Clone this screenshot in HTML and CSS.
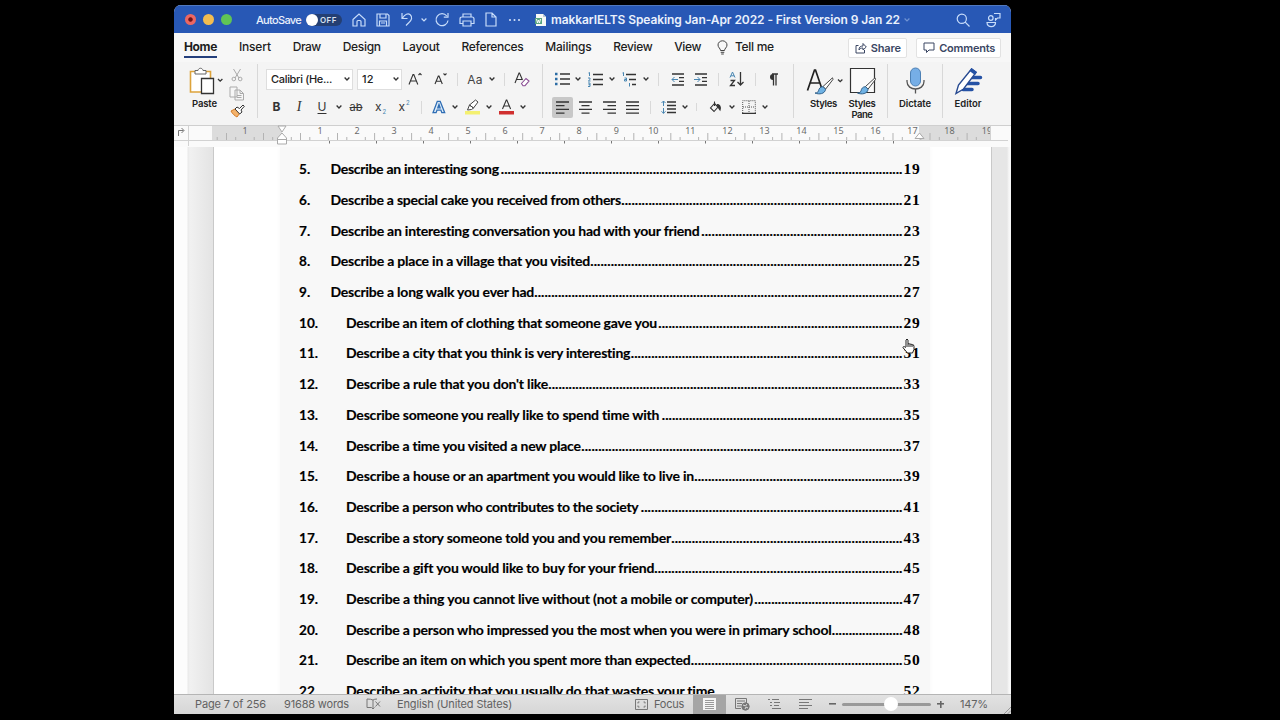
FILE: index.html
```
<!DOCTYPE html>
<html lang="en">
<head>
<meta charset="utf-8">
<title>makkarIELTS Speaking</title>
<link rel="stylesheet" href="styles.css">
</head>
<body>
<svg class="defs" width="0" height="0">
  <symbol id="chev" viewBox="0 0 8 6"><path d="M1.6 1.5 4 4 6.4 1.5"/></symbol>
  <symbol id="brush" viewBox="0 0 20 18"><path fill="#fff" stroke="#444" d="M18.5.8 9 9.5l2.6 2.6L19 2.4z"/><path fill="#6fb2e4" stroke="#34638c" d="M9 9.7c-3 0-4 2-4.500 4.200C4 15.500 2.500 16 1 16c4 1.800 10 1 10.600-3.800z"/></symbol>
</svg>
<div class="window">
  <header class="titlebar">
    <span class="light red"></span><span class="light yellow"></span><span class="light green"></span>
    <span class="autosave fit" data-w="45">AutoSave</span>
    <span class="toggle"><i></i>OFF</span>
    <svg class="ti" width="14" height="14" viewBox="0 0 14 14"><path d="M1 6.500 7 1l6 5.500V13H9V8.500Q9 7.500 8 7.500H6Q5 7.500 5 8.500V13H1z"/></svg>
    <svg class="ti" width="14" height="14" viewBox="0 0 14 14"><path d="M1 1h10.500L13 2.500V13H1zM4 1v4h6V1M3.500 13V8h7v5M5 10h4"/></svg>
    <svg class="ti" width="14" height="15" viewBox="0 0 14 15"><path d="M2 1v5.500h5.500M2.500 6C5 2 8 1 10 2.500c3 2.500 1.500 6-1 8L6 13.500"/></svg>
    <svg class="ti" width="8" height="6"><use href="#chev"/></svg>
    <svg class="ti" width="16" height="15" viewBox="0 0 16 15"><path d="M12.800 4A6 6 0 1 0 14 8.500M14 1v4.200H9.800"/></svg>
    <svg class="ti" width="16" height="14" viewBox="0 0 16 14"><path d="M4 4V1h8v3M4 10.500H1V6q0-2 2-2h10q2 0 2 2v4.500h-3M4 8h8v5H4z"/></svg>
    <svg class="ti" width="12" height="15" viewBox="0 0 12 15"><path d="M1 1h6l4 4v9H1zM7 1v4h4"/></svg>
    <svg class="ti dots" width="13" height="4"><circle cx="2" cy="2" r="1"/><circle cx="6.500" cy="2" r="1"/><circle cx="11" cy="2" r="1"/></svg>
    <svg width="13" height="14" viewBox="0 0 13 14"><path fill="#f6f9f5" d="M2 1h7l3 3v9H2z"/><path fill="#b9c9d6" d="M9 1v3h3z"/><rect x="1" y="5" width="7" height="6" fill="#59a481"/><path stroke="#fff" fill="none" d="m2.500 6 1 4 1-3 1 3 1-4"/></svg>
    <span class="doc-title fit" data-w="349">makkarIELTS Speaking Jan-Apr 2022 - First Version 9 Jan 22</span>
    <svg class="ti faint" width="8" height="6"><use href="#chev"/></svg>
    <svg class="ti" width="14" height="14" viewBox="0 0 14 14"><circle cx="5.800" cy="5.800" r="4.600"/><path d="m9.200 9.200 4.300 4.300"/></svg>
    <svg class="ti" width="15" height="16" viewBox="0 0 15 16"><circle cx="4.800" cy="6" r="2.300"/><path d="M1 10.500h8.500c.5 5-8.500 6-8.500 0zM8 1.500h6V6h-2.500L9.500 8V6"/></svg>
  </header>

  <nav class="tabs">
    <span class="tab active fit" data-w="33">Home</span>
    <span class="tab fit" data-w="32">Insert</span>
    <span class="tab fit" data-w="28">Draw</span>
    <span class="tab fit" data-w="38">Design</span>
    <span class="tab fit" data-w="37">Layout</span>
    <span class="tab fit" data-w="62">References</span>
    <span class="tab fit" data-w="46">Mailings</span>
    <span class="tab fit" data-w="39">Review</span>
    <span class="tab fit" data-w="27">View</span>
    <svg class="bulb" width="11" height="15" viewBox="0 0 11 15"><path d="M3.500 10.500C3.500 8.500 1 7.500 1 5a4.500 4.200 0 0 1 9 0c0 2.500-2.500 3.500-2.500 5.500zM3.700 12.300h3.600M4.200 14h2.600"/></svg>
    <span class="tab tell fit" data-w="39">Tell me</span>
    <span class="btn share"><svg width="12" height="12" viewBox="0 0 12 12"><path d="M3.500 3.500H1V11h8.500V8M4 8c0-3 1.500-4 4-4V1.500L11.300 5 8 8V6C6 6 5 6.500 4 8z"/></svg><span class="fit" data-w="30">Share</span></span>
    <span class="btn"><svg width="12" height="12" viewBox="0 0 12 12"><path d="M1 1h10v7H6l-2.500 2.500V8H1z"/></svg><span class="fit" data-w="56">Comments</span></span>
  </nav>

  <section class="ribbon">
    <div class="group clipboard">
      <div class="paste">
        <svg width="36" height="30" viewBox="0 0 36 30"><path fill="#fff" stroke="#dda33b" stroke-width="1.600" d="M2.500 5.500h20V26h-20z"/><path fill="#fff" stroke="#666" d="M7 8V4.500h3C10.500 1.500 14.500 1.500 15 4.500h3V8z"/><path fill="#fff" stroke="#333" stroke-width="1.300" d="M13.500 12.500h12v15h-12z"/><path class="ln" stroke-width="1.500" d="m30 13 2.200 2.200 2.200-2.200"/></svg>
        <b class="fit" data-w="25">Paste</b>
      </div>
      <div class="clips">
        <svg width="12" height="14" viewBox="0 0 12 14" fill="none" stroke="#aaa"><path d="m2.500 1 5.500 9M9.500 1 4 10"/><circle cx="2.800" cy="11" r="1.800"/><circle cx="9.200" cy="11" r="1.800"/></svg>
        <svg width="16" height="16" viewBox="0 0 16 16" fill="#f6f6f6" stroke="#aaa"><path d="M1 2h7v10H1zM6 5h5l3.500 3.500V15H6zM11 5v3.500h3.500M8 10.500h4.500M8 12.500h4.500"/></svg>
        <svg width="15" height="14" viewBox="0 0 15 14"><path fill="#f3b26b" stroke="#d37c2a" d="m1 7 4-2 4.500 4.500L7 13C5 12 2.500 10 1 7z"/><path fill="#fff" stroke="#333" d="m5 5 2-2 2.500 1.500L13 1l1.300 1.300L11 6l1 2-2.300 2z"/></svg>
      </div>
    </div>

    <div class="group font">
      <div class="row font1">
        <span class="box"><span class="fit" data-w="61">Calibri (He...</span><svg class="ln" width="8" height="6"><use href="#chev"/></svg></span>
        <span class="box"><span class="fit" data-w="11.500">12</span><svg class="ln" width="8" height="6"><use href="#chev"/></svg></span>
        <svg class="ln thin" width="14" height="14" viewBox="0 0 14 14"><path d="m1 12.500 4-10h.8l4 10M2.500 9h6M10.500 3l1.500-1.500L13.500 3"/></svg>
        <svg class="ln thin" width="13" height="14" viewBox="0 0 13 14"><path d="m1 12 3.300-8H5l3.300 8M2.300 9.200H7M9.500 1.500 11 3l1.500-1.500"/></svg>
        <i class="sep"></i>
        <span class="aa">Aa</span>
        <svg class="ln" width="8" height="6"><use href="#chev"/></svg>
        <i class="sep"></i>
        <svg class="ln thin" width="16" height="15" viewBox="0 0 16 15"><path d="m1 11 4-10h.5l3 7M2.500 7.500H8"/><path stroke="#8a4d94" fill="#fff" d="m7.500 11.500 4.500-5 3 2.500-4 4.700H9z"/></svg>
      </div>
      <div class="row font2">
        <b class="gl">B</b><span class="gl it">I</span><span class="gl un">U</span>
        <svg class="ln" width="8" height="6"><use href="#chev"/></svg>
        <span class="gl st">ab</span>
        <span class="gl">x<sub>2</sub></span><span class="gl">x<sup>2</sup></span>
        <i class="sep"></i>
        <svg width="14" height="14" viewBox="0 0 14 14" fill="#dcebf8" stroke="#2e6db4" stroke-width="1.300"><path d="M1 12.700 5.300 1.300h2.900l4.500 11.400H9.800l-.9-2.600H5l-.9 2.600zM5.800 7.800h2.300L7 4.500z"/></svg>
        <svg class="ln" width="8" height="6"><use href="#chev"/></svg>
        <svg width="15" height="16" viewBox="0 0 15 16"><path fill="#f4f070" d="M0 12h15v3.500H0z"/><path fill="#fff" stroke="#444" d="m4.500 6 6-5 2.500 2-4.500 6zM4.500 6l4 3-2 1.500-4 .5z"/></svg>
        <svg class="ln" width="8" height="6"><use href="#chev"/></svg>
        <svg width="15" height="16" viewBox="0 0 15 16"><path fill="#d0302f" d="M0 12h15v3.500H0z"/><path class="ln thin" d="M3.500 10 7.300 1h.5l3.800 9M5 7h5"/></svg>
        <svg class="ln" width="8" height="6"><use href="#chev"/></svg>
      </div>
    </div>

    <div class="group para">
      <div class="row para1">
        <svg width="15" height="14" viewBox="0 0 15 14"><path class="ln" d="M5 2h10M5 7h10M5 12h10"/><path fill="#2b6ca5" d="M0 .8h2.500v2.500H0zM0 5.800h2.500v2.500H0zM0 10.800h2.500v2.500H0z"/></svg>
        <svg class="ln" width="8" height="6"><use href="#chev"/></svg>
        <svg width="15" height="15" viewBox="0 0 15 15"><path class="ln" d="M5 2.500h10M5 7.500h10M5 12.500h10"/><path class="bl" d="M.5 1 1.500.5V4M0 6h2v1.500L.3 9H2.500M0 11h2v3.500H0M.5 12.700H2"/></svg>
        <svg class="ln" width="8" height="6"><use href="#chev"/></svg>
        <svg width="15" height="15" viewBox="0 0 15 15"><path class="ln" d="M4 2.500h10M7 7.500h7M10 12.500h4"/><path class="bl" d="M.5 1 1.500.5V4M2.500 6h2v3h-2V7.500h2M7.500 11v3.500"/></svg>
        <svg class="ln" width="8" height="6"><use href="#chev"/></svg>
        <i class="sep"></i>
        <svg width="14" height="13" viewBox="0 0 14 13"><path class="ln" d="M1 1h12M8 4.700h5M8 8.300h5M1 12h12"/><path class="bl" d="M7 6.500H1M3.500 4 1 6.500 3.500 9"/></svg>
        <svg width="14" height="13" viewBox="0 0 14 13"><path class="ln" d="M1 1h12M8 4.700h5M8 8.300h5M1 12h12"/><path class="bl" d="M0 6.500h6M3.500 4 6 6.500 3.500 9"/></svg>
        <i class="sep"></i>
        <svg width="16" height="16" viewBox="0 0 16 16"><path class="bl" d="m1 6.500 2.500-5.500L6 6.500M2 4.800h3"/><path class="ln" d="M1.500 9.500H5.500L1.500 14.500H6M11.500 1v13M8.500 11l3 3 3-3"/></svg>
        <i class="sep"></i>
        <svg width="10" height="13" viewBox="0 0 10 13"><path fill="#333" d="M5 1a3 3 0 0 0 0 6z"/><path class="ln" d="M4 1h6M5.500 1v11.500M8 1v11.500"/></svg>
      </div>
      <div class="row para2">
        <span class="on"><svg class="ln" width="13" height="13"><path d="M0 1h13M0 4.700h8.500M0 8.400h13M0 12.100h8.500"/></svg></span>
        <svg class="ln" width="13" height="13"><path d="M0 1h13M2.500 4.700h8M0 8.400h13M2.500 12.100h8"/></svg>
        <svg class="ln" width="13" height="13"><path d="M0 1h13M4.500 4.700H13M0 8.400h13M4.500 12.100H13"/></svg>
        <svg class="ln" width="13" height="13"><path d="M0 1h13M0 4.700h13M0 8.400h13M0 12.100h13"/></svg>
        <i class="sep"></i>
        <svg width="15" height="14" viewBox="0 0 15 14"><path class="ln" d="M6 2h9M6 5.500h9M6 9h9M6 12.500h9"/><path class="bl" d="M2.500 1v5M.5 3l2-2 2 2M2.500 8v5.500M.5 11.300l2 2 2-2"/></svg>
        <svg class="ln" width="8" height="6"><use href="#chev"/></svg>
        <i class="sep short"></i>
        <svg class="ln thin" width="13" height="13" viewBox="0 0 13 13"><path d="m5.500 2.500 3.500 3.500-4 4.500L1.500 7zM5.500 5V.5"/><path fill="#333" d="M8.500 3.500c2 0 3.500 2 2.500 5.500L9 6z"/></svg>
        <svg class="ln" width="8" height="6"><use href="#chev"/></svg>
        <svg width="14" height="14" viewBox="0 0 14 14"><path fill="none" stroke="#555" stroke-dasharray="1 1" d="M.7 13V.7h12.600V13M7 1v12M1 7h12"/><path class="ln" d="M0 13.300h14"/></svg>
        <svg class="ln" width="8" height="6"><use href="#chev"/></svg>
      </div>
    </div>

    <div class="group styles">
      <div class="big">
        <svg width="38" height="28" viewBox="0 0 38 28"><path fill="none" stroke="#222" stroke-width="1.700" d="M.5 24.500 7.500 4h1L15.500 24.500M3 17h10"/><use href="#brush" x="7" y="11" width="20" height="18"/><path class="ln" d="m31 13.500 2.200 2.200 2.200-2.200"/></svg>
        <b class="fit" data-w="27">Styles</b>
      </div>
      <div class="big pane">
        <svg width="28" height="28" viewBox="0 0 28 28"><path fill="#fafafa" stroke="#333" stroke-width="1.200" d="M2.500 2.500h24v24h-24z"/><use href="#brush" x="8.500" y="11" width="20" height="18"/></svg>
        <b class="fit" data-w="27">Styles</b><b class="fit" data-w="21">Pane</b>
      </div>
    </div>
    <div class="group one">
      <div class="big">
        <svg width="20" height="28" viewBox="0 0 20 28"><rect x="5.500" y="2" width="10" height="18" rx="5" fill="#76aee6" stroke="#4c80b4"/><path fill="none" stroke="#555" stroke-width="1.300" d="M2 14v1.500c0 10 17 10 17 0V14M10.500 23v4.500"/></svg>
        <b class="fit" data-w="32">Dictate</b>
      </div>
    </div>
    <div class="group one last">
      <div class="big">
        <svg width="28" height="28" viewBox="0 0 28 28"><path stroke="#2552a5" stroke-width="3.500" stroke-linecap="round" d="M15 11.500h11.500M12 17.500h12M9 23.500h9"/><path fill="#fff" stroke="#274a91" stroke-width="1.400" d="M2 27.500 4.500 19 17.500 3l4.500 3.500L9.500 23z"/><path fill="#2552a5" d="m17.500 2 5.500 4-2 3-5.500-4z"/></svg>
        <b class="fit" data-w="27">Editor</b>
      </div>
    </div>
  </section>

  <div class="ruler"><svg id="ruler" width="837" height="20"></svg></div>

  <main class="canvas">
    <div class="gutter"></div>
    <div class="page"><div class="toc" id="toc"></div></div>
    <div class="edge"></div>
    <svg class="cursor" width="14" height="16" viewBox="0 0 14 16"><path fill="#fff" stroke="#222" d="M4 9V2q1-2 2 0v4q1-1 2 .3 1-.8 2 .4 2-.5 2 1.800v3L10.500 15H5.500L1 9.700Q1 7.500 4 9.500M6 6v3M8 6.500V9M10 7v2"/></svg>
  </main>

  <footer class="status">
    <span class="fit" data-w="71">Page 7 of 256</span>
    <span class="fit words" data-w="65">91688 words</span>
    <svg class="sl book" width="15" height="12" viewBox="0 0 15 12"><path d="M7 10V2Q5 1 1 1v8.500h4.500L7 11l1.500-1.500M7 2q1.500-1 4-1M9.500 3.500 14 8.500M14 3.500 9.500 8.500"/></svg>
    <span class="fit" data-w="115">English (United States)</span>
    <svg class="sl focus" width="13" height="11" viewBox="0 0 13 11"><path d="M.5.5h12v10H.5zM3 4.500V3h1.500M8.500 3H10v1.500M3 6.500V8h1.500M8.500 8H10V6.500"/></svg>
    <span class="fit" data-w="30">Focus</span>
    <span class="view"><svg width="13" height="12" viewBox="0 0 13 12"><path fill="#f5f5f5" d="M0 0h13v12H0z"/><path stroke="#999" d="M2 2.500h9M2 4.500h9M2 6.500h9M2 8.500h9M2 10.500h9"/></svg></span>
    <svg class="sl web" width="15" height="13" viewBox="0 0 15 13"><path d="M6 10.500H.5v-10h11V5M2 3h8M2 5.500h5M2 8h4"/><circle cx="10.500" cy="8.500" r="3.700" fill="#777"/><path stroke="#ddd" d="m8 7 2.500 1 1.500-2M10 11l1-2 2 1"/></svg>
    <svg class="sl outl" width="13" height="11"><path d="M0 .5h2M4 .5h7M2 3.500h2M6 3.500h6M2 6.500h2M6 6.500h5M4 9.500h9"/></svg>
    <svg class="sl draft" width="13" height="11"><path d="M0 .5h13M0 3.500h10M0 6.500h13M0 9.500h9"/></svg>
    <span class="sym minus"></span>
    <span class="slider"><i></i></span>
    <span class="sym plus"></span>
    <span class="fit zoom" data-w="28">147%</span>
    <svg class="grip" width="8" height="8"><path d="M1 8 8 1M4.500 8 8 4.500"/></svg>
  </footer>
</div>
<script src="app.js"></script>
</body>
</html>
```
FILE: styles.css
```
* { box-sizing: border-box; }
body { margin: 0; height: 720px; overflow: hidden; background: #000; font-family: Inter, "Liberation Sans", sans-serif; color: #222; }
svg { display: block; overflow: visible; flex: none; }
.defs { position: absolute; }
.fit { white-space: nowrap; display: inline-block; }
.window { width: 837px; height: 709px; margin: 5px 0 0 174px; display: flex; flex-direction: column; background: #f4f4f4; border-radius: 7px 7px 0 0; overflow: hidden; }

.titlebar { height: 28px; flex: none; background: #2858b5; border-top: 1px solid #5079bf; display: flex; align-items: center; color: #eaf1fc; }
.light { width: 11px; height: 11px; border-radius: 50%; flex: none; margin-right: 7px; }
.red { background: radial-gradient(circle, #71131a 0 1.8px, #ec6762 2.6px); margin-left: 11px; }
.yellow { background: #f3bd50; }
.green { background: #60c455; margin-right: 24px; }
.autosave { font-size: 11px; font-weight: 500; width: 45px; margin-right: 5px; }
.toggle { width: 36px; height: 12px; border-radius: 6px; background: #243f73; display: flex; flex: none; align-items: center; font-size: 8px; font-weight: 600; letter-spacing: .4px; color: #d9e1ef; margin-right: 10px; }
.toggle i { width: 12px; height: 12px; border-radius: 50%; background: #fff; margin-right: 2px; }
.ti { fill: none; stroke: #c7dcfa; stroke-width: 1.2; margin-right: 10px; }
.ti:nth-of-type(3) { margin-right: 6px; }
.ti:nth-of-type(4) { margin-right: 6px; }
.ti:nth-of-type(5) { margin-right: 9px; }
.dots { fill: #d7e5fb; stroke: none; margin: 0 13px 0 1px; }
.doc-title { font-size: 12px; font-weight: 600; width: 349px; margin: 0 3px 0 4px; }
.faint { opacity: .45; margin-right: 45px; }
.faint + .ti { margin-right: 16px; }

.tabs { height: 29px; flex: none; display: flex; align-items: center; gap: 21.900px; padding-left: 10px; font-size: 12px; font-weight: 500; color: #1d1d1d; background: #f7f7f7; }
.tab { height: 29px; line-height: 27px; }
.active { font-weight: 700; background: linear-gradient(#243f7c, #243f7c) 0 23px / 100% 2px no-repeat; }
.bulb { fill: none; stroke: #444; margin: 0 -15px 0 -6px; }
.tell { margin-right: 52px; }
.btn { height: 20px; border: 1px solid #e2e2e2; background: #fff; border-radius: 2px; display: flex; align-items: center; gap: 4px; padding: 0 5px 0 6px; font-size: 11px; font-weight: 600; color: #3a4663; }
.btn svg { fill: none; stroke: #3a4663; }
.share { margin-right: -12.500px; }

.ribbon { height: 64px; flex: none; display: flex; background: #f4f4f4; border-bottom: 1px solid #cfcfcf; }
.group { position: relative; padding-top: 2px; border-right: 1px solid #d8d8d8; height: 54px; margin-top: 2px; flex: none; }
.ribbon b { font-size: 9.5px; font-weight: 600; line-height: 11px; }
.clipboard { width: 84px; display: flex; padding-left: 14px; }
.paste { width: 38px; display: flex; flex-direction: column; align-items: flex-start; gap: 2px; }
.paste b { margin-left: 4px; }
.clips { display: flex; flex-direction: column; align-items: center; gap: 3px; margin-left: 3px; padding-top: 2px; }
.row { display: grid; align-items: center; justify-items: center; height: 28px; }
.font { width: 285px; padding: 1px 0 0 8px; }
.font1 { grid-template-columns: 87px 4px 45px 26px 24px 10px 26px 7px 18px 18px; }
.font1 > :nth-child(2) { grid-column: 3; }
.font2 { grid-template-columns: 21px 24px 22px 11px 24px 25px 22px 12px 23px 10px 25px 8px 27px 5px; }
.para { width: 251px; padding: 1px 0 0 9px; }
.para1 { grid-template-columns: 20px 12px 23px 10px 25px 8px 17px 21px 25px 11px 25px 13px 22px; }
.para2 { grid-template-columns: 21px 25px 22px 24px 12px 25px 7px 17px 21px 11px 24px 8px; }
.box { width: 100%; height: 21px; background: #fff; border: 1px solid #dedede; display: flex; align-items: center; justify-content: space-between; padding: 0 1px 0 4px; font-size: 11px; font-weight: 500; }
.ln { fill: none; stroke: #333; stroke-width: 1.3; }
.thin { stroke-width: 1.1; }
.bl { fill: none; stroke: #4886b2; stroke-width: 1; }
.sep { width: 1px; height: 13px; background: #d9d9d9; }
.short { height: 8px; }
.aa { font-size: 12px; color: #444; letter-spacing: .3px; }
.gl { font-size: 12px; line-height: 14px; color: #333; }
.ribbon .font2 b { font-size: 12px; line-height: 14px; font-weight: 700; }
.it { font-family: "Liberation Serif", serif; font-style: italic; font-size: 14px; }
.un { text-decoration: underline; text-underline-offset: 2px; }
.st { text-decoration: line-through; font-size: 11px; }
.gl sub, .gl sup { font-size: 6px; line-height: 0; color: #4886b2; margin-left: 1px; }
.gl sup { vertical-align: 6px; }
.gl sub { vertical-align: -3px; }
.on { width: 21px; height: 21px; background: #c8c8c8; border-radius: 2px; display: grid; place-items: center; }
.styles { width: 94px; display: flex; padding-left: 13px; }
.big { display: flex; flex-direction: column; align-items: center; gap: 4px; }
.styles .big:first-child { width: 38px; }
.styles .big:first-child b { margin-right: 5px; }
.pane { margin-left: 3px; gap: 0; }
.pane svg { margin-bottom: 4px; }
.styles .pane b { margin-right: 0; }
.one { width: 55px; }
.last { width: 50px; border: 0; }

.ruler { height: 21px; flex: none; background: #fafafa; }
#ruler text { font: 9px "Noto Sans", sans-serif; fill: #6a6a6a; text-anchor: middle; }
#ruler .tick { stroke: #b3b3b3; fill: none; }
#ruler .stop { stroke: #777; fill: none; }
#ruler .shade { fill: #dcdcdc; }
#ruler .blank { fill: #fafafa; }
#ruler .mark { fill: #fff; stroke: #aaa; }
#ruler .rule { stroke: #d2d2d2; }

.canvas { flex: 1; min-height: 0; position: relative; display: flex; background: #fff; overflow: hidden; }
.gutter { width: 40px; flex: none; background: linear-gradient(90deg, #fcfcfc 13px, #e9e9e9 14px, #f1f1f1 16px, #e4e4e4 38px); border-right: 1px solid #c9c9c9; }
.page { width: 777px; flex: none; padding: 0 61px 0 66px; background: #fff; }
.toc { padding: 7px 9px 0 19px; background: #f8f8f8; box-shadow: 0 0 5px #f8f8f8; height: 560px; }
.entry { display: flex; align-items: center; height: 30.700px; color: #000; font: bold 14px/18px Lato, sans-serif; white-space: nowrap; }
.entry .num { width: 31.500px; flex: none; font-size: 13.600px; -webkit-text-stroke: .15px #000; }
.entry .num.wide { width: 47px; }
.entry .fit { flex: none; -webkit-text-stroke: .15px #000; }
.entry .leader { flex: 1; min-width: 0; text-align: right; margin-right: 1px; -webkit-text-stroke: .2px #000; }
.entry .pg { width: 17.500px; flex: none; font: bold 15.500px/18px "Liberation Serif", serif; letter-spacing: .7px; }
.edge { flex: 1; background: linear-gradient(90deg, #e6e6e6 15px, #f7f7f7 17px); border-left: 1px solid #c9c9c9; }
.cursor { position: absolute; left: 728px; top: 191px; }

.status { height: 20px; flex: none; background: linear-gradient(#e2e2e2, #d6d6d6); border-top: 1px solid #b5b5b5; display: flex; align-items: center; padding: 0 0 1px 21px; font-size: 11px; color: #626262; }
.words { margin-left: 18px; }
.sl { fill: none; stroke: #777; }
.book { margin: 0 16px 0 17px; }
.focus { margin: 0 6px 0 123px; }
.view { width: 33px; height: 19px; background: #a5a5a5; margin-left: 9px; display: grid; place-items: center; }
.web { margin-left: 9px; }
.outl { margin-left: 18px; }
.draft { margin-left: 18px; }
.sym { width: 7px; height: 7px; background: linear-gradient(#666, #666) center / 7px 1.600px no-repeat; margin-left: 17px; }
.slider { width: 89px; height: 3px; background: #999; border-radius: 2px; margin-left: 6px; display: flex; align-items: center; }
.slider i { width: 14px; height: 14px; border-radius: 50%; background: #fff; margin-left: 42px; flex: none; }
.plus { margin-left: 6px; background: linear-gradient(#666, #666) center / 7px 1.600px no-repeat, linear-gradient(#666, #666) center / 1.600px 7px no-repeat; }
.zoom { margin-left: 16px; }
.grip { margin: 11px 0 0 15px; stroke: #999; fill: none; }
```
FILE: app.js
```
const entries = [
  [5, "Describe an interesting song", 19, 168.5, 1.5],
  [6, "Describe a special cake you received from others", 21, 290.5, 0],
  [7, "Describe an interesting conversation you had with your friend", 23, 369.5, 1],
  [8, "Describe a place in a village that you visited", 25, 259.5, 0],
  [9, "Describe a long walk you ever had", 27, 203.5, 0],
  [10, "Describe an item of clothing that someone gave you", 29, 311, 1],
  [11, "Describe a city that you think is very interesting", 31, 284.5, 0],
  [12, "Describe a rule that you don't like", 33, 202, 0],
  [13, "Describe someone you really like to spend time with", 35, 313.5, 2],
  [14, "Describe a time you visited a new place", 37, 235, 0],
  [15, "Describe a house or an apartment you would like to live in", 39, 348, 0],
  [16, "Describe a person who contributes to the society", 41, 292.5, 2],
  [17, "Describe a story someone told you and you remember", 43, 325, 0],
  [18, "Describe a gift you would like to buy for your friend", 45, 308, 0],
  [19, "Describe a thing you cannot live without (not a mobile or computer)", 47, 407, 1],
  [20, "Describe a person who impressed you the most when you were in primary school", 48, 485.5, 0],
  [21, "Describe an item on which you spent more than expected", 50, 344.5, 0],
  [22, "Describe an activity that you usually do that wastes your time", 52, 369, 1]
];
document.getElementById("toc").innerHTML = entries.map(([n, title, page, width, gap]) =>
  `<div class="entry"><span class="num${n > 9 ? " wide" : ""}">${n}.</span>` +
  `<span class="fit" data-w="${width}" style="margin-right:${gap}px">${title}</span>` +
  `<span class="leader"></span><span class="pg">${page}</span></div>`).join("");

// Track each label so that it fills its nominal width.
document.querySelectorAll(".fit").forEach(el => {
  const target = parseFloat(el.dataset.w);
  el.style.width = "auto";
  const natural = el.getBoundingClientRect().width;
  el.style.letterSpacing = (target - natural) / el.textContent.length + "px";
  el.style.width = target + "px";
});

// Fill each leader with whole dots, close to the nominal pitch.
const pitch = 3.37;
document.querySelectorAll(".leader").forEach(el => {
  const room = el.getBoundingClientRect().width;
  el.textContent = ".".repeat(20);
  const range = document.createRange();
  range.selectNodeContents(el);
  const dot = range.getBoundingClientRect().width / 20;
  const count = Math.floor(room / pitch);
  el.style.letterSpacing = (room - 0.3) / count - dot + "px";
  el.textContent = ".".repeat(count);
});

const unit = 37.03, origin = 108;
let out = '<rect class="shade" x="38" y="0" width="70" height="14"/><rect class="shade" x="745" y="0" width="71" height="14"/>';
let ticks = "";
for (let q = -7; q <= 76; q++) {
  const x = (origin + q * unit / 4).toFixed(1);
  if (q % 4 !== 0 && +x < 816) ticks += `M${x} 14V${q % 2 === 0 ? 7 : 11}`;
}
out += `<path class="tick" d="${ticks}"/>`;
for (let i = 1; i <= 19; i++) {
  out += `<text x="${i === 19 ? 813 : (origin + 1 + i * unit).toFixed(1)}" y="8">${i}</text>`;
}
out += '<rect class="blank" x="816" y="0" width="21" height="14"/><path class="rule" d="M0 14.500H834M14.500 0V20M816.500 0V14"/>';
out += '<text x="71" y="8">1</text>';
let stops = "";
for (let i = 0; i < 13; i++) stops += `M${(155.5 + i * 47).toFixed(1)} 15v2.500`;
out += `<path class="stop" d="${stops}"/>`;
out += '<path class="mark" d="M104 0h8l-4 6zM108 7l4.500 5v6h-9v-6zM103.500 13.500h9M745.500 7l4.500 5.500h-9z"/>';
out += '<path class="stop" d="M4.500 10V4.500h5M7.500 2l2.500 2.500L7.500 7"/>';
document.getElementById("ruler").innerHTML = out;
```
